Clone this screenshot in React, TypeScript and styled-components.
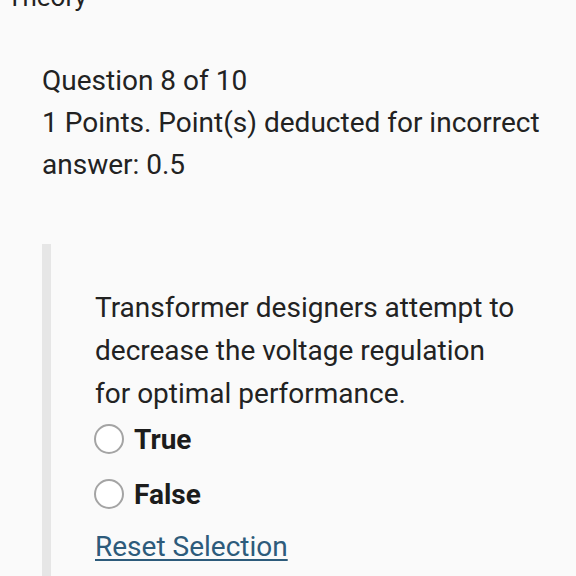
import React, { useState } from 'react';
import styled, { createGlobalStyle } from 'styled-components';

const GlobalStyle = createGlobalStyle`
    html, body {
        margin: 0;
        padding: 0;
        background: #fafafa;
    }
    body {
        font-family: Roboto, "Noto Sans", Arial, sans-serif;
        color: #222222;
        overflow: hidden;
    }
`;

const Page = styled.div`
    width: 576px;
    height: 576px;
    overflow: hidden;
`;

const Title = styled.h1`
    margin: -23px 0 0 0;
    padding-left: 7px;
    font-size: 26px;
    font-weight: 400;
    line-height: 40px;
`;

const Meta = styled.div`
    margin-top: 43px;
    padding-left: 42px;
    font-size: 28px;
    line-height: 42px;
`;

const QuestionCard = styled.div`
    margin: 58px 0 0 42px;
    border-left: 9px solid #e6e6e6;
    padding: 42px 52px 40px 44px;
`;

const Prompt = styled.div`
    font-size: 28px;
    line-height: 43px;
`;

const Options = styled.div`
    margin: 4px 0 0 -1px;
    display: flex;
    flex-direction: column;
    gap: 15px;
`;

const Option = styled.label`
    display: flex;
    align-items: center;
    gap: 10px;
    height: 40px;
    font-size: 28px;
    font-weight: 700;
    color: #1c1c1c;
    cursor: pointer;
`;

interface RadioProps {
    checked: boolean;
}
const Radio = styled.span<RadioProps>`
    box-sizing: border-box;
    flex: none;
    width: 30px;
    height: 30px;
    border-radius: 50%;
    border: 2px solid #a4a4a4;
    background: ${(p: RadioProps) => (p.checked ? 'radial-gradient(circle, #2d5b7b 40%, #ffffff 44%)' : '#ffffff')};
`;

const ResetLink = styled.a`
    display: inline-block;
    margin: 12px 0 0 0;
    font-size: 28px;
    line-height: 42px;
    color: #2d5b7b;
    text-decoration: underline;
    text-decoration-thickness: 2px;
    text-underline-offset: 3px;
    cursor: pointer;
`;

const choices = ['True', 'False'];

function App() {
    const [selected, setSelected] = useState<string | null>(null);
    return (
        <>
            <GlobalStyle />
            <Page>
                <Title>Theory</Title>
                <Meta>
                    <div>Question 8 of 10</div>
                    <div>1 Points. Point(s) deducted for incorrect answer: 0.5</div>
                </Meta>
                <QuestionCard>
                    <Prompt>
                        Transformer designers attempt to decrease the voltage regulation for optimal performance.
                    </Prompt>
                    <Options>
                        {choices.map((c) => (
                            <Option key={c} onClick={() => setSelected(c)}>
                                <Radio checked={selected === c} />
                                {c}
                            </Option>
                        ))}
                    </Options>
                    <ResetLink onClick={() => setSelected(null)}>Reset Selection</ResetLink>
                </QuestionCard>
            </Page>
        </>
    );
}

export default App;
